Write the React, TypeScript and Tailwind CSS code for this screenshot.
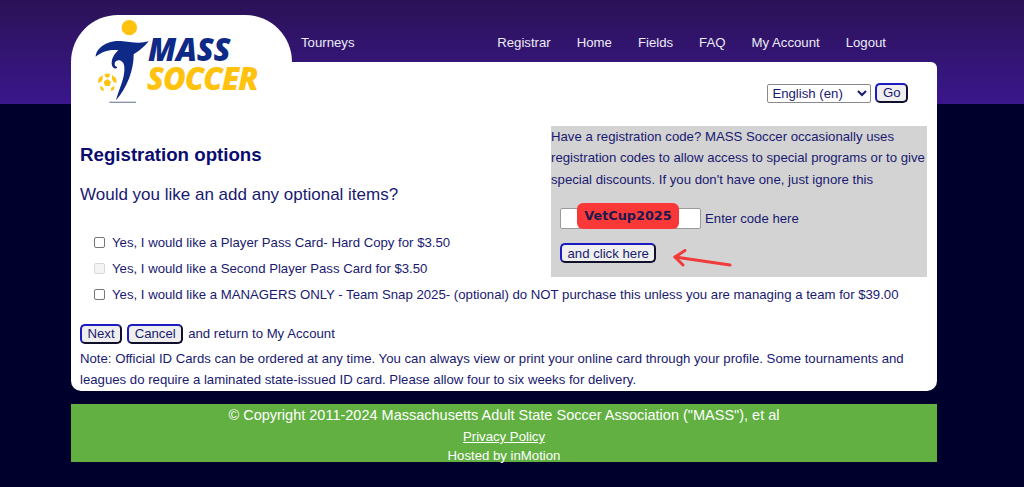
const sans = "font-['Liberation_Sans',Arial,sans-serif]";

function Logo() {
  return (
    <div className="relative h-[90px] w-[170px]">
      <svg viewBox="0 0 240 285" className="absolute left-[-6px] top-[-4px] h-[95px] w-[80px]">
        <circle cx="118" cy="38" r="23" fill="#ffc20e" />
        <path
          d="M17 125 C18 100 50 76 92 78 C120 80 150 88 176 78 C165 95 145 108 131 118 C132 165 110 220 78 256 C85 225 106 190 103 155 C102 135 82 130 75 142 C72 150 75 155 82 156 C78 165 66 160 65 146 C65 130 72 118 85 106 C60 102 35 110 17 125 Z"
          fill="#0e2a86"
        />
        <rect x="58" y="260" width="80" height="4" fill="#8790ad" />
        <g fill="#ffc20e">
          <path d="M52 192 L63 200 L59 213 L45 213 L41 200 Z" />
          <path d="M44 176 L60 176 L58 186 L52 188 L46 186 Z" />
          <path d="M66 180 L78 190 L80 204 L70 200 L66 192 Z" />
          <path d="M38 180 L26 190 L24 204 L34 200 L38 192 Z" />
          <path d="M30 212 L40 218 L42 228 L32 224 Z" />
          <path d="M74 212 L64 218 L62 228 L72 224 Z" />
        </g>
      </svg>
      <div className="absolute left-[52px] top-[17px] font-['Open_Sans',sans-serif] text-[31px] leading-[26px] font-extrabold italic tracking-[-0.2px] text-[#0e2a86]">
        MASS
      </div>
      <div className="absolute left-[51px] top-[46px] font-['Open_Sans',sans-serif] text-[31px] leading-[26px] font-extrabold italic tracking-[-1px] text-[#ffc20e]">
        SOCCER
      </div>
    </div>
  );
}

function OldButton({ children }: { children: React.ReactNode }) {
  return (
    <button className="h-5 rounded-[5px] border-2 border-t-[#1c1cc0] border-l-[#1c1cc0] border-r-[#10102a] border-b-[#10102a] bg-[#efefef] px-[5.5px] text-[13.2px] leading-none text-[#191970]">
      {children}
    </button>
  );
}

function OptionRow({ label, disabled }: { label: string; disabled?: boolean }) {
  return (
    <label className="flex items-center">
      <input
        type="checkbox"
        disabled={disabled}
        className="ml-[14px] mr-[7px] size-[11px] appearance-none rounded-[2px] border border-[#767676] bg-white disabled:border-[#d8d8d8] disabled:bg-[#f4f4f4]"
      />
      <span>{label}</span>
    </label>
  );
}

export default function App() {
  return (
    <div
      className={`${sans} h-[487px] overflow-hidden bg-[#00002c] bg-[linear-gradient(#2b1256,#3a178c)] bg-[length:100%_104px] bg-no-repeat pt-[15px] text-[13.2px] text-[#191970]`}
    >
      <div className="mx-auto w-[866px] -translate-x-[8px]">
        <div className="flex h-[47px] items-start">
          <div className="relative h-[47px] w-[221px] rounded-t-[47px] bg-white">
            <div className="absolute left-[25px] top-[4px]">
              <Logo />
            </div>
          </div>
          <nav className="flex h-[56px] flex-1 items-center pl-[9px] pr-[51px] text-[#ecebf7]">
            <a className="mr-auto">Tourneys</a>
            <div className="flex gap-[26px]">
              <a>Registrar</a>
              <a>Home</a>
              <a>Fields</a>
              <a>FAQ</a>
              <a>My Account</a>
              <a>Logout</a>
            </div>
          </nav>
        </div>

        <main className="h-[329px] rounded-b-[10px] rounded-tr-[6px] bg-white pl-[9px] pr-[10px]">
          <div className="flex h-[64px] items-center justify-end gap-[4px] pb-[4px] pr-[19px] pt-[2px]">
            <select className="h-[19px] w-[104px] rounded-[2px] border border-[#8a8a8a] bg-white text-[13.2px] text-[#191970]">
              <option>English (en)</option>
            </select>
            <OldButton>Go</OldButton>
          </div>

          <div className="flex justify-between">
            <div className="pt-[19px]">
              <h1 className="text-[18.7px] leading-5 font-bold text-[#0b0b70]">Registration options</h1>
              <p className="mt-[20px] text-[17px] leading-5">Would you like an add any optional items?</p>
              <div className="mt-[30px] flex flex-col gap-[11px] leading-[15px]">
                <OptionRow label="Yes, I would like a Player Pass Card- Hard Copy for $3.50" />
                <OptionRow disabled label="Yes, I would like a Second Player Pass Card for $3.50" />
              </div>
            </div>

            <section className="h-[151px] w-[376px] bg-[#d3d3d3] leading-[21.3px]">
              <p>
                Have a registration code? MASS Soccer occasionally uses registration codes to allow access to special
                programs or to give special discounts. If you don't have one, just ignore this
              </p>
              <div className="mt-[18px] flex items-center pl-[9px]">
                <div className="relative">
                  <input className="block h-[21px] w-[141px] rounded-[2px] border border-[#9a9a9a] bg-white" />
                  <span className="absolute left-[17px] top-[-5px] flex h-[26px] w-[102px] items-center justify-center rounded-[6px] bg-[#fb3838] font-['DejaVu_Sans',sans-serif] text-[12.8px] font-bold text-[#1a1a4e]">
                    VetCup2025
                  </span>
                </div>
                <span className="ml-[4px]">Enter code here</span>
              </div>
              <div className="relative mt-[14px] pl-[9px] leading-none">
                <OldButton>and click here</OldButton>
                <svg viewBox="0 0 60 20" className="absolute left-[121px] top-[6px] h-5 w-[60px]" fill="none" stroke="#f23a3a" strokeWidth="3" strokeLinecap="round" strokeLinejoin="round">
                  <path d="M3 8 L58 16" />
                  <path d="M13 1.5 L3 8 L11 16" />
                </svg>
              </div>
            </section>
          </div>

          <div className="mt-[10px] leading-[15px]">
            <OptionRow label="Yes, I would like a MANAGERS ONLY - Team Snap 2025- (optional) do NOT purchase this unless you are managing a team for $39.00" />
          </div>

          <div className="mt-[22px] flex items-center gap-[5px]">
            <OldButton>Next</OldButton>
            <OldButton>Cancel</OldButton>
            <span>and return to My Account</span>
          </div>
          <p className="mt-[4px] leading-[21px]">
            Note: Official ID Cards can be ordered at any time. You can always view or print your online card through
            your profile. Some tournaments and leagues do require a laminated state-issued ID card. Please allow four to
            six weeks for delivery.
          </p>
        </main>

        <footer className="mt-[13px] flex h-[58px] flex-col items-center bg-[#62b041] pt-[1px] text-center text-white">
          <p className="text-[14.5px] leading-5">© Copyright 2011-2024 Massachusetts Adult State Soccer Association ("MASS"), et al</p>
          <a className="mt-[3px] leading-[18px] underline">Privacy Policy</a>
          <p className="leading-[19px]">Hosted by inMotion</p>
        </footer>
      </div>
    </div>
  );
}
